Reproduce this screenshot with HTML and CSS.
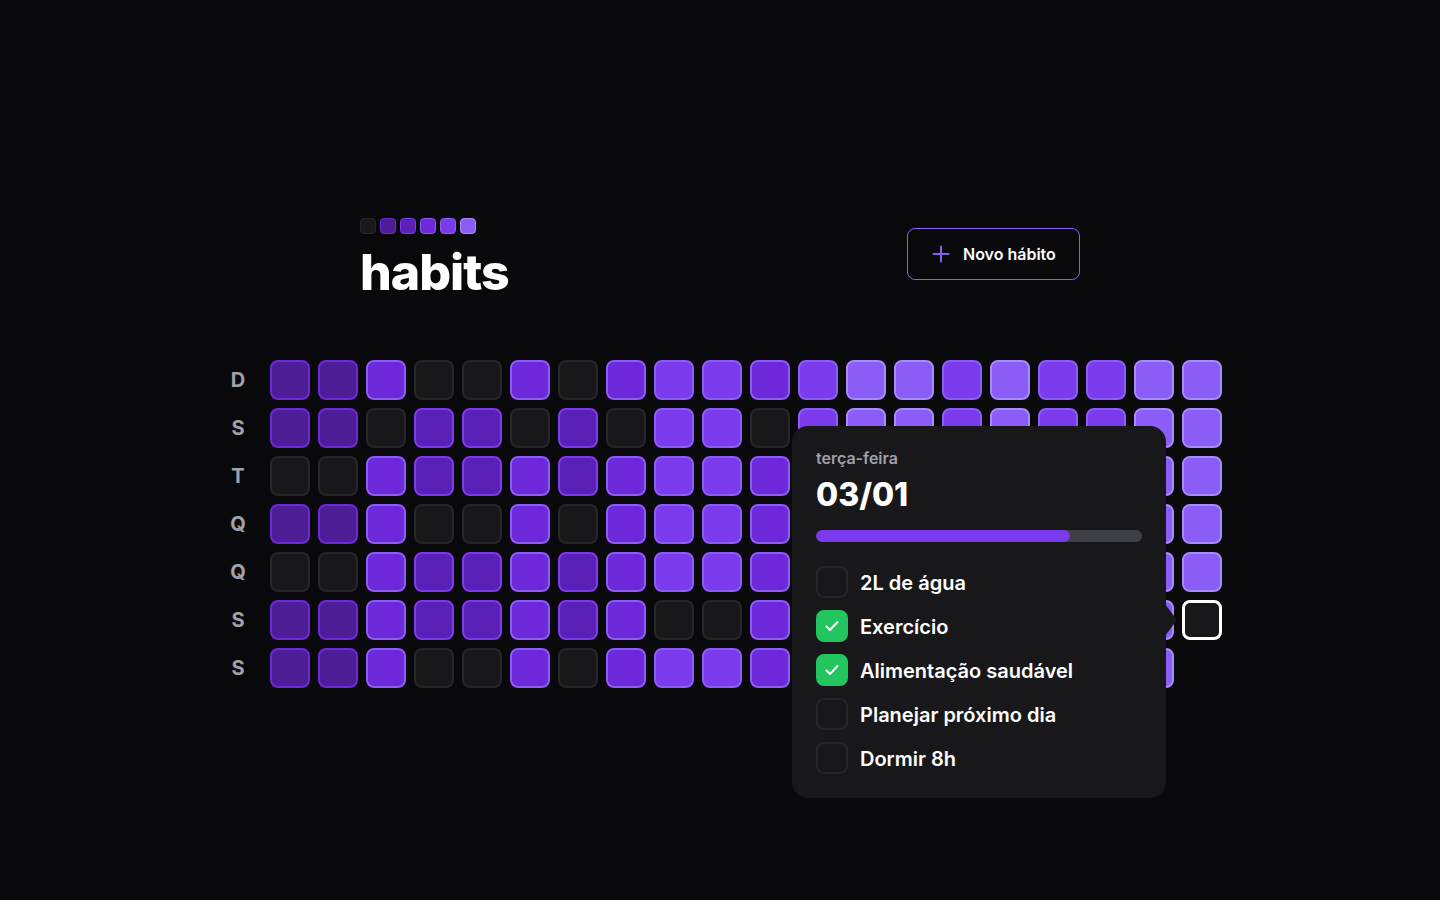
FILE: index.html
```html
<!DOCTYPE html>
<html lang="pt-BR">
<head>
<meta charset="utf-8">
<title>habits</title>
<link rel="stylesheet" href="styles.css">
</head>
<body>
<main class="page">
  <header class="header">
    <div class="logo">
      <div class="logo-squares">
        <span class="sq l0"></span><span class="sq l1"></span><span class="sq l2"></span><span class="sq l3"></span><span class="sq l4"></span><span class="sq l5"></span>
      </div>
      <div class="logo-text">habits</div>
    </div>
    <button class="new-btn" type="button">
      <svg width="20" height="20" viewBox="0 0 20 20" fill="none" stroke="#8b5cf6" stroke-width="2" stroke-linecap="round"><path d="M10 2.5v15M2.5 10h15"/></svg>
      <span>Novo hábito</span>
    </button>
  </header>

  <section class="summary">
    <div class="weekdays">
      <div class="wd">D</div><div class="wd">S</div><div class="wd">T</div><div class="wd">Q</div><div class="wd">Q</div><div class="wd">S</div><div class="wd">S</div>
    </div>
    <div class="grid">
      <!-- row D -->
      <div class="cell l1"></div><div class="cell l1"></div><div class="cell l3"></div><div class="cell l0"></div><div class="cell l0"></div><div class="cell l3"></div><div class="cell l0"></div><div class="cell l3"></div><div class="cell l4"></div><div class="cell l4"></div><div class="cell l3"></div><div class="cell l4"></div><div class="cell l5"></div><div class="cell l5"></div><div class="cell l4"></div><div class="cell l5"></div><div class="cell l4"></div><div class="cell l4"></div><div class="cell l5"></div><div class="cell l5"></div>
      <!-- row S -->
      <div class="cell l1"></div><div class="cell l1"></div><div class="cell l0"></div><div class="cell l2"></div><div class="cell l2"></div><div class="cell l0"></div><div class="cell l2"></div><div class="cell l0"></div><div class="cell l4"></div><div class="cell l4"></div><div class="cell l0"></div><div class="cell l4"></div><div class="cell l5"></div><div class="cell l5"></div><div class="cell l4"></div><div class="cell l5"></div><div class="cell l4"></div><div class="cell l4"></div><div class="cell l5"></div><div class="cell l5"></div>
      <!-- row T -->
      <div class="cell l0"></div><div class="cell l0"></div><div class="cell l3"></div><div class="cell l2"></div><div class="cell l2"></div><div class="cell l3"></div><div class="cell l2"></div><div class="cell l3"></div><div class="cell l4"></div><div class="cell l4"></div><div class="cell l3"></div><div class="cell l4"></div><div class="cell l5"></div><div class="cell l5"></div><div class="cell l4"></div><div class="cell l5"></div><div class="cell l4"></div><div class="cell l4"></div><div class="cell l5"></div><div class="cell l5"></div>
      <!-- row Q -->
      <div class="cell l1"></div><div class="cell l1"></div><div class="cell l3"></div><div class="cell l0"></div><div class="cell l0"></div><div class="cell l3"></div><div class="cell l0"></div><div class="cell l3"></div><div class="cell l4"></div><div class="cell l4"></div><div class="cell l3"></div><div class="cell l4"></div><div class="cell l5"></div><div class="cell l5"></div><div class="cell l4"></div><div class="cell l5"></div><div class="cell l4"></div><div class="cell l4"></div><div class="cell l5"></div><div class="cell l5"></div>
      <!-- row Q -->
      <div class="cell l0"></div><div class="cell l0"></div><div class="cell l3"></div><div class="cell l2"></div><div class="cell l2"></div><div class="cell l3"></div><div class="cell l2"></div><div class="cell l3"></div><div class="cell l4"></div><div class="cell l4"></div><div class="cell l3"></div><div class="cell l4"></div><div class="cell l5"></div><div class="cell l5"></div><div class="cell l4"></div><div class="cell l5"></div><div class="cell l4"></div><div class="cell l4"></div><div class="cell l5"></div><div class="cell l5"></div>
      <!-- row S -->
      <div class="cell l1"></div><div class="cell l1"></div><div class="cell l3"></div><div class="cell l2"></div><div class="cell l2"></div><div class="cell l3"></div><div class="cell l2"></div><div class="cell l3"></div><div class="cell l0"></div><div class="cell l0"></div><div class="cell l3"></div><div class="cell l4"></div><div class="cell l5"></div><div class="cell l5"></div><div class="cell l4"></div><div class="cell l5"></div><div class="cell l4"></div><div class="cell l4"></div><div class="cell l5"></div><div class="cell sel"></div>
      <!-- row S -->
      <div class="cell l1"></div><div class="cell l1"></div><div class="cell l3"></div><div class="cell l0"></div><div class="cell l0"></div><div class="cell l3"></div><div class="cell l0"></div><div class="cell l3"></div><div class="cell l4"></div><div class="cell l4"></div><div class="cell l3"></div><div class="cell l4"></div><div class="cell l5"></div><div class="cell l5"></div><div class="cell l4"></div><div class="cell l5"></div><div class="cell l4"></div><div class="cell l4"></div><div class="cell l5"></div><div class="cell blank"></div>
    </div>

    <div class="popover">
      <div class="pop-day">terça-feira</div>
      <div class="pop-date">03/01</div>
      <div class="progress"><div class="progress-fill" style="width: 78%"></div></div>
      <ul class="habits">
        <li class="habit"><span class="box"></span><span class="habit-name">2L de água</span></li>
        <li class="habit"><span class="box checked"><svg width="20" height="20" viewBox="0 0 20 20" fill="none" stroke="#fff" stroke-width="2" stroke-linecap="round" stroke-linejoin="round"><path d="M4.5 10.5l3.5 3.5 7.5-8"/></svg></span><span class="habit-name">Exercício</span></li>
        <li class="habit"><span class="box checked"><svg width="20" height="20" viewBox="0 0 20 20" fill="none" stroke="#fff" stroke-width="2" stroke-linecap="round" stroke-linejoin="round"><path d="M4.5 10.5l3.5 3.5 7.5-8"/></svg></span><span class="habit-name">Alimentação saudável</span></li>
        <li class="habit"><span class="box"></span><span class="habit-name">Planejar próximo dia</span></li>
        <li class="habit"><span class="box"></span><span class="habit-name">Dormir 8h</span></li>
      </ul>
      <svg class="pop-arrow" width="12" height="32" viewBox="0 0 12 32"><path d="M0 0 L12 16 L0 32 Z" fill="#18181b"/></svg>
    </div>
  </section>
</main>
</body>
</html>
```

FILE: styles.css
```css
* { box-sizing: border-box; }
html, body { margin: 0; padding: 0; }
body {
  background: #09090b;
  color: #fff;
  font-family: Inter, "Noto Sans", sans-serif;
  width: 1440px;
  height: 900px;
  overflow: hidden;
}
.page {
  display: flex;
  flex-direction: column;
  align-items: center;
  padding-top: 218px;
}
.header {
  width: 720px;
  display: flex;
  justify-content: space-between;
  align-items: flex-start;
}
.logo { display: flex; flex-direction: column; }
.logo-squares { display: flex; gap: 4px; }
.sq {
  width: 16px;
  height: 16px;
  border-radius: 4px;
  border: 1px solid;
}
.logo-text {
  margin-top: 13px;
  font-size: 50px;
  line-height: 50px;
  font-weight: 800;
  letter-spacing: -1px;
  color: #fff;
}
.new-btn {
  margin-top: 10px;
  height: 52px;
  width: 173px;
  display: flex;
  align-items: center;
  gap: 12px;
  padding: 0 23px;
  background: transparent;
  border: 1px solid #8b5cf6;
  border-radius: 8px;
  color: #fff;
  font-family: Inter, sans-serif;
  font-size: 16px;
  font-weight: 600;
}
.new-btn svg { flex: none; }

.summary {
  position: relative;
  margin-top: 63px;
  display: flex;
  gap: 12px;
}
.weekdays {
  display: grid;
  grid-template-rows: repeat(7, 40px);
  gap: 8px;
}
.wd {
  width: 40px;
  height: 40px;
  display: flex;
  align-items: center;
  justify-content: center;
  font-size: 20px;
  font-weight: 700;
  color: #a1a1aa;
}
.grid {
  display: grid;
  grid-template-columns: repeat(20, 40px);
  grid-template-rows: repeat(7, 40px);
  gap: 8px;
}
.cell {
  width: 40px;
  height: 40px;
  border-radius: 8px;
  border: 2px solid;
}
.l0 { background: #18181b; border-color: #27272a; }
.l1 { background: #4c1d95; border-color: #6d28d9; }
.l2 { background: #5b21b6; border-color: #7c3aed; }
.l3 { background: #6d28d9; border-color: #8b5cf6; }
.l4 { background: #7c3aed; border-color: #8b5cf6; }
.l5 { background: #8b5cf6; border-color: #a78bfa; }
.cell.sel { background: #18181b; border: 3px solid #fff; }
.cell.blank { border: none; background: transparent; }

.popover {
  position: absolute;
  left: 574px;
  top: 66px;
  width: 374px;
  height: 372px;
  background: #18181b;
  border-radius: 16px;
  padding: 22px 24px 24px;
  display: flex;
  flex-direction: column;
}
.pop-day {
  font-size: 16px;
  line-height: 20px;
  font-weight: 600;
  color: #a1a1aa;
}
.pop-date {
  margin-top: 9px;
  font-size: 32px;
  line-height: 36px;
  font-weight: 800;
  color: #fff;
}
.progress {
  margin-top: 17px;
  height: 12px;
  border-radius: 12px;
  background: #3f3f46;
  overflow: hidden;
}
.progress-fill {
  height: 100%;
  background: #7c3aed;
  border-radius: 12px;
}
.habits {
  list-style: none;
  margin: 24px 0 0;
  padding: 0;
  display: flex;
  flex-direction: column;
  gap: 12px;
}
.habit {
  display: flex;
  align-items: center;
  gap: 12px;
  height: 32px;
}
.box {
  width: 32px;
  height: 32px;
  border-radius: 8px;
  border: 2px solid #27272a;
  background: #18181b;
  display: flex;
  align-items: center;
  justify-content: center;
  flex: none;
}
.box.checked { background: #22c55e; border-color: #22c55e; }
.habit-name {
  font-size: 20px;
  line-height: 28px;
  font-weight: 600;
  color: #fff;
  padding-top: 1px;
}
.pop-arrow {
  position: absolute;
  right: -11px;
  top: 178px;
}
```
